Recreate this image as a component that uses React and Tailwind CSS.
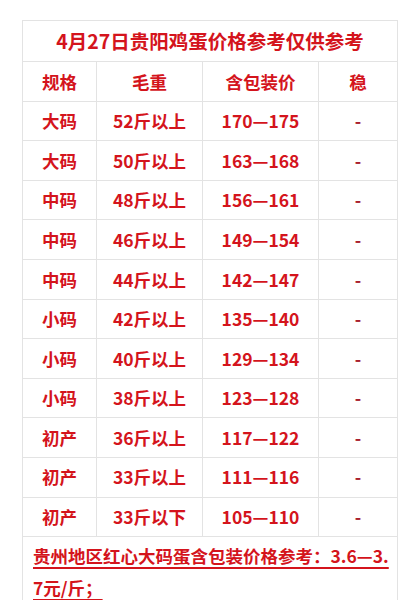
const rows = [
  ['大码', '52斤以上', '170—175'],
  ['大码', '50斤以上', '163—168'],
  ['中码', '48斤以上', '156—161'],
  ['中码', '46斤以上', '149—154'],
  ['中码', '44斤以上', '142—147'],
  ['小码', '42斤以上', '135—140'],
  ['小码', '40斤以上', '129—134'],
  ['小码', '38斤以上', '123—128'],
  ['初产', '36斤以上', '117—122'],
  ['初产', '33斤以上', '111—116'],
  ['初产', '33斤以下', '105—110'],
];

const cell = 'border border-[#e3e3e3] h-[39.6px] p-0 text-center align-middle';

export default function App() {
  return (
    <div
      className="min-h-[600px] bg-white pt-[20px] pl-[22px] font-bold text-[#d4141c]"
      style={{ fontFamily: '"Noto Sans CJK SC", "Noto Sans", sans-serif' }}
    >
      <table className="w-[375px] table-fixed border-collapse text-[17.5px] leading-none">
        <colgroup>
          <col className="w-[74px]" />
          <col className="w-[106px]" />
          <col className="w-[116px]" />
          <col className="w-[79px]" />
        </colgroup>
        <tbody>
          <tr>
            <td colSpan={4} className="border border-[#e3e3e3] h-[41px] p-0 text-center align-middle text-[19.5px]">
              4月27日贵阳鸡蛋价格参考仅供参考
            </td>
          </tr>
          <tr>
            <td className={cell}>规格</td>
            <td className={cell}>毛重</td>
            <td className={cell}>含包装价</td>
            <td className={cell}>稳</td>
          </tr>
          {rows.map((r, i) => (
            <tr key={i}>
              <td className={cell}>{r[0]}</td>
              <td className={cell}>{r[1]}</td>
              <td className={cell}>{r[2]}</td>
              <td className={cell + ' text-[#a8202e]'}>-</td>
            </tr>
          ))}
          <tr>
            <td colSpan={4} className="border border-[#e3e3e3] pt-[3px] pb-[12px] pl-[10px] pr-[8px] text-left text-[17.5px] leading-[32px]">
              <span className="underline decoration-[#d4141c] decoration-2 underline-offset-4 break-all">
                贵州地区红心大码蛋含包装价格参考：3.6—3.7元/斤；
              </span>
            </td>
          </tr>
        </tbody>
      </table>
    </div>
  );
}
